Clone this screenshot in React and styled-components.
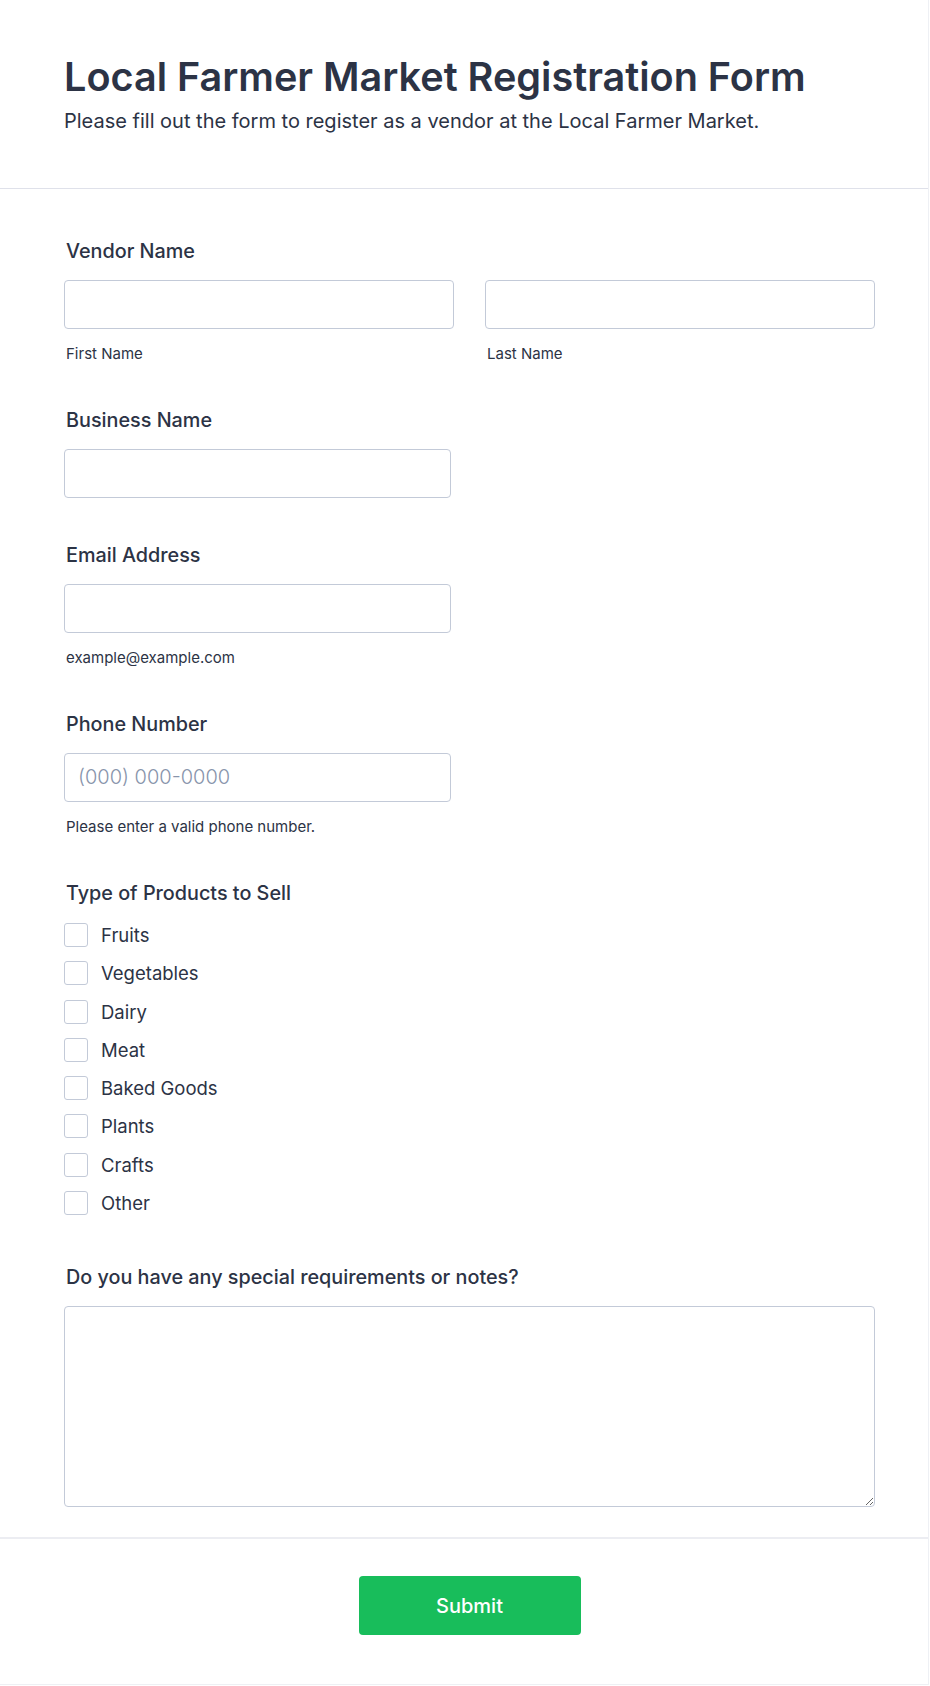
import styled, { createGlobalStyle } from 'styled-components';

const GlobalStyle = createGlobalStyle`
  html, body {
    margin: 0;
    padding: 0;
    background: #fff;
  }
  body {
    font-family: 'Inter', 'Noto Sans', sans-serif;
    color: #2c3345;
  }
  * {
    box-sizing: border-box;
  }
`;

const Card = styled.div`
  width: 929px;
  background: #fff;
  border-right: 1px solid #eef0f4;
  border-bottom: 1px solid #eef0f4;
`;

const Header = styled.header`
  padding: 52.5px 64px 55.5px;
  border-bottom: 1px solid #dfe1ea;

  h1 {
    margin: 0;
    font-size: 39.6px;
    line-height: 48px;
    font-weight: 600;
    color: #2c3345;
  }
  p {
    margin: 8px 0 0;
    font-size: 20px;
    line-height: 24px;
    color: #2c3345;
  }
`;

const Body = styled.div`
  padding: 50px 53px 30px 64px;
  display: flex;
  flex-direction: column;
  gap: 45.5px;
`;

const Field = styled.div`
  display: flex;
  flex-direction: column;
  padding-bottom: ${(p) => p.$extra || 0}px;
`;

const Label = styled.label`
  font-size: 19.8px;
  line-height: 24px;
  font-weight: 500;
  color: #2c3345;
  padding-left: 2px;
  margin-bottom: 17px;
`;

const Row = styled.div`
  display: grid;
  grid-template-columns: 1fr 1fr;
  column-gap: 31px;
`;

const Col = styled.div`
  display: flex;
  flex-direction: column;
`;

const Input = styled.input`
  width: ${(p) => (p.$half ? '387px' : '100%')};
  height: 48.5px;
  border: 1px solid #c3cad8;
  border-radius: 4px;
  padding: 0 13px;
  font-family: 'Inter', 'Noto Sans', sans-serif;
  font-size: 20px;
  font-weight: 300;
  color: #2c3345;
  background: #fff;
  outline: none;

  &::placeholder {
    color: #8894ab;
  }
`;

const Sub = styled.span`
  margin-top: 16px;
  font-size: 15px;
  line-height: 18px;
  color: #2c3345;
  padding-left: 2px;
`;

const Checks = styled.div`
  display: flex;
  flex-direction: column;
  gap: 14.3px;
  margin-top: 1px;
`;

const CheckRow = styled.label`
  display: flex;
  align-items: center;
  gap: 13px;
  height: 24px;
  font-size: 18.5px;
  color: #2c3345;
`;

const Box = styled.span`
  width: 24px;
  height: 24px;
  border: 1px solid #c3cad8;
  border-radius: 3px;
  background: #fff;
  flex: none;
`;

const TextArea = styled.textarea`
  width: 100%;
  height: 201px;
  border: 1px solid #c3cad8;
  border-radius: 4px;
  padding: 12px 13px;
  font-family: 'Inter', 'Noto Sans', sans-serif;
  font-size: 18px;
  color: #2c3345;
  resize: vertical;
  outline: none;
  display: block;
`;

const Footer = styled.footer`
  border-top: 2px solid #ecedf2;
  padding: 37px 53px 49px 64px;
  display: flex;
  justify-content: center;
`;

const SubmitButton = styled.button`
  width: 222px;
  height: 59px;
  border: none;
  border-radius: 4px;
  background: #18bd5b;
  color: #fff;
  font-family: 'Inter', 'Noto Sans', sans-serif;
  font-size: 20px;
  font-weight: 500;
  cursor: pointer;
`;

const products = ['Fruits', 'Vegetables', 'Dairy', 'Meat', 'Baked Goods', 'Plants', 'Crafts', 'Other'];

export default function App() {
  return (
    <>
      <GlobalStyle />
      <Card>
        <Header>
          <h1>Local Farmer Market Registration Form</h1>
          <p>Please fill out the form to register as a vendor at the Local Farmer Market.</p>
        </Header>
        <Body>
          <Field>
            <Label>Vendor Name</Label>
            <Row>
              <Col>
                <Input type="text" />
                <Sub>First Name</Sub>
              </Col>
              <Col>
                <Input type="text" />
                <Sub>Last Name</Sub>
              </Col>
            </Row>
          </Field>

          <Field>
            <Label>Business Name</Label>
            <Input type="text" $half />
          </Field>

          <Field>
            <Label>Email Address</Label>
            <Input type="email" $half />
            <Sub>example@example.com</Sub>
          </Field>

          <Field>
            <Label>Phone Number</Label>
            <Input type="tel" $half placeholder="(000) 000-0000" />
            <Sub>Please enter a valid phone number.</Sub>
          </Field>

          <Field $extra={4.5}>
            <Label>Type of Products to Sell</Label>
            <Checks>
              {products.map((p) => (
                <CheckRow key={p}>
                  <Box />
                  {p}
                </CheckRow>
              ))}
            </Checks>
          </Field>

          <Field>
            <Label>Do you have any special requirements or notes?</Label>
            <TextArea />
          </Field>
        </Body>
        <Footer>
          <SubmitButton type="button">Submit</SubmitButton>
        </Footer>
      </Card>
    </>
  );
}
